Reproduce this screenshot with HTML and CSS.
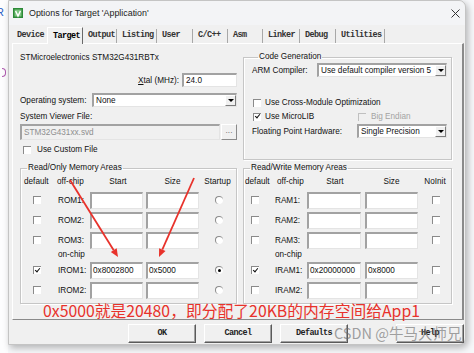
FILE: index.html
```html
<!DOCTYPE html>
<html lang="en">
<head>
    <meta charset="UTF-8">
    <title>Options for Target 'Application'</title>
    <link rel="stylesheet" href="styles.css">
</head>
<body>
<div class="desk">
    <div class="behind">
        <span class="behind-r">R</span>
        <span class="behind-p"></span>
    </div>
    <div class="window">
        <div class="titlebar">
            <svg class="app-icon" width="10" height="10" viewBox="0 0 10 10">
                <rect width="10" height="10" fill="#2c8a37"/>
                <rect x="1.5" y="1.5" width="7" height="7" fill="#7cc47f"/>
                <path d="M2.6 3 L5 8 L7.4 3" stroke="#fff" stroke-width="1.5" fill="none"/>
            </svg>
            <span class="title">Options for Target 'Application'</span>
            <svg class="close" width="9" height="9" viewBox="0 0 9 9">
                <path d="M0.5 0.5 L8.5 8.5 M8.5 0.5 L0.5 8.5" stroke="#333" stroke-width="1"/>
            </svg>
        </div>

        <div class="tabs">
            <div class="tab">Device</div>
            <div class="tab active">Target</div>
            <div class="tab">Output</div>
            <div class="tab">Listing</div>
            <div class="tab">User</div>
            <div class="tab">C/C++</div>
            <div class="tab">Asm</div>
            <div class="tab">Linker</div>
            <div class="tab">Debug</div>
            <div class="tab">Utilities</div>
        </div>

        <div class="panel">
            <div class="top">
                <div class="left-col">
                    <div class="device">STMicroelectronics STM32G431RBTx</div>
                    <div class="xtal-row">
                        <span><u>X</u>tal (MHz):</span>
                        <div class="field xtal">24.0</div>
                    </div>
                    <div class="os-row">
                        <span>Operating system:</span>
                        <div class="select os"><span class="val">None</span><span class="drop"></span></div>
                    </div>
                    <div class="svf-label">System Viewer File:</div>
                    <div class="svf-row">
                        <div class="field disabled svf">STM32G431xx.svd</div>
                        <div class="dots">...</div>
                    </div>
                    <div class="check-row custom">
                        <span class="cb"></span>
                        <span>Use Custom File</span>
                    </div>
                </div>

                <fieldset class="group codegen">
                    <legend>Code Generation</legend>
                    <div class="cg-row">
                        <span>ARM Compiler:</span>
                        <div class="select arm"><span class="val">Use default compiler version 5</span><span class="drop"></span></div>
                    </div>
                    <div class="check-row cmo">
                        <span class="cb"></span>
                        <span>Use Cross-Module Optimization</span>
                    </div>
                    <div class="micro-row">
                        <div class="check-row">
                            <span class="cb on"></span>
                            <span>Use MicroLIB</span>
                        </div>
                        <div class="check-row off">
                            <span class="cb dis"></span>
                            <span>Big Endian</span>
                        </div>
                    </div>
                    <div class="cg-row fph">
                        <span>Floating Point Hardware:</span>
                        <div class="select fpu"><span class="val">Single Precision</span><span class="drop"></span></div>
                    </div>
                </fieldset>
            </div>

            <div class="mem">
                <fieldset class="group memgroup rom">
                    <legend>Read/Only Memory Areas</legend>
                    <div class="mrow head">
                        <span class="h-def">default</span>
                        <span class="h-off">off-chip</span>
                        <span class="h-mid">Start</span>
                        <span class="h-mid">Size</span>
                        <span class="h-mid">Startup</span>
                    </div>
                    <div class="mrow">
                        <span class="cell"><span class="cb"></span></span>
                        <span class="name">ROM1:</span>
                        <span class="field mf"></span>
                        <span class="field mf"></span>
                        <span class="cell"><span class="rb"></span></span>
                    </div>
                    <div class="mrow">
                        <span class="cell"><span class="cb"></span></span>
                        <span class="name">ROM2:</span>
                        <span class="field mf"></span>
                        <span class="field mf"></span>
                        <span class="cell"><span class="rb"></span></span>
                    </div>
                    <div class="mrow">
                        <span class="cell"><span class="cb"></span></span>
                        <span class="name">ROM3:</span>
                        <span class="field mf"></span>
                        <span class="field mf"></span>
                        <span class="cell"><span class="rb"></span></span>
                    </div>
                    <div class="mrow onchip"><span></span><span class="name">on-chip</span></div>
                    <div class="mrow">
                        <span class="cell"><span class="cb on"></span></span>
                        <span class="name">IROM1:</span>
                        <span class="field mf">0x8002800</span>
                        <span class="field mf">0x5000</span>
                        <span class="cell"><span class="rb on"></span></span>
                    </div>
                    <div class="mrow">
                        <span class="cell"><span class="cb"></span></span>
                        <span class="name">IROM2:</span>
                        <span class="field mf"></span>
                        <span class="field mf"></span>
                        <span class="cell"><span class="rb"></span></span>
                    </div>
                </fieldset>

                <fieldset class="group memgroup ram">
                    <legend>Read/Write Memory Areas</legend>
                    <div class="mrow head">
                        <span class="h-def">default</span>
                        <span class="h-off">off-chip</span>
                        <span class="h-mid">Start</span>
                        <span class="h-mid">Size</span>
                        <span class="h-mid">NoInit</span>
                    </div>
                    <div class="mrow">
                        <span class="cell"><span class="cb"></span></span>
                        <span class="name">RAM1:</span>
                        <span class="field mf"></span>
                        <span class="field mf"></span>
                        <span class="cell"><span class="cb"></span></span>
                    </div>
                    <div class="mrow">
                        <span class="cell"><span class="cb"></span></span>
                        <span class="name">RAM2:</span>
                        <span class="field mf"></span>
                        <span class="field mf"></span>
                        <span class="cell"><span class="cb"></span></span>
                    </div>
                    <div class="mrow">
                        <span class="cell"><span class="cb"></span></span>
                        <span class="name">RAM3:</span>
                        <span class="field mf"></span>
                        <span class="field mf"></span>
                        <span class="cell"><span class="cb"></span></span>
                    </div>
                    <div class="mrow onchip"><span></span><span class="name">on-chip</span></div>
                    <div class="mrow">
                        <span class="cell"><span class="cb on"></span></span>
                        <span class="name">IRAM1:</span>
                        <span class="field mf">0x20000000</span>
                        <span class="field mf">0x8000</span>
                        <span class="cell"><span class="cb"></span></span>
                    </div>
                    <div class="mrow">
                        <span class="cell"><span class="cb"></span></span>
                        <span class="name">IRAM2:</span>
                        <span class="field mf"></span>
                        <span class="field mf"></span>
                        <span class="cell"><span class="cb"></span></span>
                    </div>
                </fieldset>
            </div>
        </div>

        <div class="buttons">
            <div class="btn">OK</div>
            <div class="btn">Cancel</div>
            <div class="btn">Defaults</div>
            <div class="btn help">Help</div>
        </div>
    </div>

    <!-- annotation drawn on top of the screenshot -->
    <div class="note">0x5000就是20480，即分配了20KB的内存空间给App1</div>
    <svg class="arrows" width="474" height="353" viewBox="0 0 474 353">
        <line x1="70" y1="180" x2="113.7" y2="250.2" stroke="#e8322b" stroke-width="1.8"/>
        <polygon points="118,257 110.8,252.1 116.7,248.3" fill="#e8322b"/>
        <line x1="194" y1="178" x2="162.3" y2="249.7" stroke="#e8322b" stroke-width="1.8"/>
        <polygon points="159,257 159.1,248.3 165.5,251.1" fill="#e8322b"/>
    </svg>
    <div class="watermark">CSDN @牛马大师兄</div>
</div>
</body>
</html>
```

FILE: styles.css
```css
body {
    margin: 0;
    background: #fbfbfc;
    font-family: "Liberation Sans", Arial, sans-serif;
    font-size: 8.2px;
    color: #111;
}
.desk {
    position: relative;
    width: 474px;
    height: 353px;
    overflow: hidden;
    display: flex;
    background: #f7f8fa;
}
.behind {
    width: 8px;
    flex: none;
    overflow: hidden;
    display: flex;
    flex-direction: column;
    background: #fdfdfe;
}
.behind-r {
    margin: 6px 0 0 -4px;
    color: #2b5fc7;
    font-size: 11px;
}
.behind-p {
    margin: 50px 0 0 2px;
    width: 3px;
    height: 7px;
    border: 1px solid #b05ab0;
    border-left: none;
    border-radius: 0 4px 4px 0;
}
.window {
    width: 458px;
    height: 345px;
    box-sizing: border-box;
    background: #f0f0f0;
    border: 1px solid #c4c4c4;
    border-radius: 0 7px 7px 0;
    box-shadow: 2px 3px 7px rgba(0, 0, 0, 0.28);
}

/* title bar */
.titlebar {
    height: 24px;
    display: flex;
    align-items: center;
    padding-left: 4px;
    background: #f3f4f6;
    border-radius: 0 7px 0 0;
}
.app-icon {
    margin-top: -1px;
}
.title {
    margin-left: 6px;
    font-size: 8.9px;
    color: #1b1b1b;
}
.close {
    margin-left: auto;
    margin-right: 5px;
}

/* tabs */
.tabs {
    display: flex;
    align-items: flex-end;
    height: 18px;
    margin-left: 3px;
    font-family: "Liberation Mono", "Courier New", monospace;
    font-size: 8.5px;
    font-weight: bold;
    letter-spacing: -0.6px;
    color: #333;
}
.tab {
    box-sizing: border-box;
    height: 14px;
    padding-left: 5px;
    line-height: 13px;
    border-right: 1px solid #a8a8a8;
    white-space: nowrap;
}
.tab:nth-child(1) { width: 35px; border-right: none; }
.tab:nth-child(2) { width: 36px; }
.tab:nth-child(3) { width: 34px; }
.tab:nth-child(4) { width: 40px; }
.tab:nth-child(5) { width: 36px; }
.tab:nth-child(6) { width: 35px; }
.tab:nth-child(7) { width: 35px; }
.tab:nth-child(8) { width: 37px; }
.tab:nth-child(9) { width: 36px; }
.tab:nth-child(10) { width: 49px; }
.tab.active {
    height: 17px;
    line-height: 17px;
    margin-bottom: -1px;
    position: relative;
    background: #f0f0f0;
    border-top: 1px solid #fff;
    border-left: 1px solid #fff;
    border-right: 1px solid #6a6a6a;
    color: #000;
}

/* tab page */
.panel {
    box-sizing: border-box;
    width: 452px;
    height: 277px;
    margin-left: 3px;
    padding: 8px 0 0 7px;
    border-top: 1px solid #fff;
    border-left: 1px solid #fff;
    border-right: 2px solid #8a8a8a;
    border-bottom: 1px solid #8a8a8a;
}
.top {
    display: grid;
    grid-template-columns: 217px 209px;
    column-gap: 6px;
}
.left-col {
    display: flex;
    flex-direction: column;
}
.device {
    height: 12px;
    line-height: 12px;
}
.xtal-row {
    display: flex;
    justify-content: flex-end;
    align-items: center;
    gap: 3px;
    margin-top: 9px;
    height: 14px;
}
.os-row {
    display: flex;
    align-items: center;
    margin-top: 6px;
    height: 14px;
}
.os-row .select {
    margin-left: auto;
    width: 145px;
}
.svf-label {
    margin-top: 4px;
    height: 11px;
    line-height: 11px;
}
.svf-row {
    display: flex;
    gap: 1px;
    margin-top: 2px;
    height: 16px;
}
.dots {
    box-sizing: border-box;
    width: 16px;
    height: 16px;
    line-height: 12px;
    text-align: center;
    color: #777;
    border: 1px solid;
    border-color: #fff #8a8a8a #8a8a8a #fff;
}
.check-row {
    display: flex;
    align-items: center;
    gap: 4px;
    height: 11px;
}
.custom {
    margin-top: 4px;
    padding-left: 3px;
    gap: 6px;
}

/* fields */
.field {
    display: block;
    box-sizing: border-box;
    background: #fff;
    border-top: 2px solid #a2a2a2;
    border-left: 2px solid #a2a2a2;
    border-right: 1px solid #e4e4e4;
    border-bottom: 1px solid #e4e4e4;
    padding-left: 2px;
    white-space: nowrap;
    overflow: hidden;
}
.xtal {
    width: 55px;
    height: 14px;
    line-height: 11px;
}
.svf {
    width: 200px;
    height: 16px;
    line-height: 13px;
}
.field.disabled {
    background: #f0f0f0;
    color: #8e8e8e;
}
.select {
    display: flex;
    align-items: center;
    box-sizing: border-box;
    height: 14px;
    background: #fff;
    border-top: 2px solid #a2a2a2;
    border-left: 2px solid #a2a2a2;
    border-right: 1px solid #e4e4e4;
    border-bottom: 1px solid #e4e4e4;
}
.select .val {
    padding-left: 2px;
    flex: 1;
    white-space: nowrap;
}
.drop {
    box-sizing: border-box;
    width: 11px;
    height: 11px;
    display: flex;
    align-items: center;
    justify-content: center;
    background: #f0f0f0;
    border: 1px solid;
    border-color: #fff #7c7c7c #7c7c7c #fff;
}
.drop::after {
    content: "";
    border-top: 3px solid #000;
    border-left: 3px solid transparent;
    border-right: 3px solid transparent;
}

/* check boxes and radios */
.cb {
    position: relative;
    display: inline-block;
    box-sizing: border-box;
    width: 8px;
    height: 8px;
    flex: none;
    background: #fff;
    border-top: 1px solid #8a8a8a;
    border-left: 1px solid #8a8a8a;
}
.cb.on::after {
    content: "";
    position: absolute;
    left: 1.5px;
    top: -0.5px;
    width: 2px;
    height: 4px;
    border-right: 1.5px solid #111;
    border-bottom: 1.5px solid #111;
    transform: rotate(40deg);
}
.cb.dis {
    background: #f0f0f0;
    border-color: #c0c0c0;
}
.rb {
    position: relative;
    display: inline-block;
    box-sizing: border-box;
    width: 8px;
    height: 8px;
    border-radius: 50%;
    background: #fff;
    border-top: 1px solid #8a8a8a;
    border-left: 1px solid #8a8a8a;
}
.rb.on::after {
    content: "";
    position: absolute;
    left: 2px;
    top: 2px;
    width: 3px;
    height: 3px;
    border-radius: 50%;
    background: #000;
}

/* group boxes */
.group {
    margin: 0;
    padding: 0;
    min-width: 0;
    box-sizing: border-box;
    border: 1px solid #c6c6c6;
    box-shadow: 1px 1px 0 #fff, inset 1px 1px 0 #fff;
}
.group legend {
    padding: 0 1px;
    margin-left: 6px;
    line-height: 10px;
}
.codegen {
    height: 108px;
    padding: 1px 4px 0 8px;
}
.cg-row {
    display: flex;
    align-items: center;
    height: 14px;
}
.cg-row .select {
    margin-left: auto;
}
.arm {
    width: 130px;
}
.fpu {
    width: 90px;
}
.cmo {
    margin-top: 20px;
    padding-left: 1px;
}
.micro-row {
    display: grid;
    grid-template-columns: 105px auto;
    margin-top: 3px;
    padding-left: 1px;
}
.check-row.off {
    gap: 5px;
    color: #a3a3a3;
}
.fph {
    margin-top: 2px;
}

/* memory areas */
.mem {
    display: grid;
    grid-template-columns: 217px 209px;
    column-gap: 6px;
    margin-top: 3px;
}
.memgroup {
    padding: 2px 0 3px 0;
}
.mrow {
    display: grid;
    height: 20px;
    align-items: center;
}
.mrow.head {
    height: 12px;
    margin-bottom: 3px;
}
.mrow.onchip {
    height: 10px;
    line-height: 10px;
}
.rom .mrow {
    grid-template-columns: 32px 37px 56px 53px 37px;
}
.ram .mrow {
    grid-template-columns: 22px 40px 58px 55px 32px;
}
.cell {
    display: flex;
    justify-content: center;
}
.h-mid {
    text-align: center;
}
.rom .h-def { padding-left: 3px; }
.rom .h-off { padding-left: 4px; }
.rom .name { padding-left: 5px; }
.ram .h-def { padding-left: 1px; }
.ram .h-off { padding-left: 11px; }
.ram .name { padding-left: 9px; }
.mf {
    height: 17px;
    line-height: 14px;
    padding-left: 1px;
}
.rom .mf:nth-child(3) { width: 53px; }
.rom .mf:nth-child(4) { width: 53px; }
.ram .mf:nth-child(3) { width: 54px; margin-left: 1px; }
.ram .mf:nth-child(4) { width: 53px; margin-left: 1px; }
.rom .cell:last-child { padding-left: 2px; }
.ram .cell:last-child { padding-left: 2px; }

/* dialog buttons */
.buttons {
    display: flex;
    gap: 8px;
    margin: 4px 0 0 119px;
    font-family: "Liberation Mono", "Courier New", monospace;
    font-size: 8.5px;
    font-weight: bold;
    letter-spacing: -0.6px;
    color: #222;
}
.btn {
    box-sizing: border-box;
    width: 68px;
    height: 19px;
    line-height: 17px;
    text-align: center;
    border: 1px solid;
    border-color: #fff #5a5a5a #5a5a5a #fff;
    box-shadow: inset -1px -1px 0 #a0a0a0;
}
.btn.help {
    margin-left: 40px;
}

/* annotation overlay */
.note {
    position: absolute;
    left: 43px;
    top: 302px;
    font-family: "Noto Sans CJK SC", "Noto Sans", sans-serif;
    font-size: 15.8px;
    line-height: 18px;
    color: #e8322b;
    white-space: nowrap;
}
.arrows {
    position: absolute;
    left: 0;
    top: 0;
    pointer-events: none;
}
.watermark {
    position: absolute;
    left: 334px;
    top: 324px;
    font-family: "Noto Sans CJK SC", "Noto Sans", sans-serif;
    font-size: 14.5px;
    line-height: 18px;
    color: rgba(110, 110, 110, 0.65);
    white-space: nowrap;
}
```
